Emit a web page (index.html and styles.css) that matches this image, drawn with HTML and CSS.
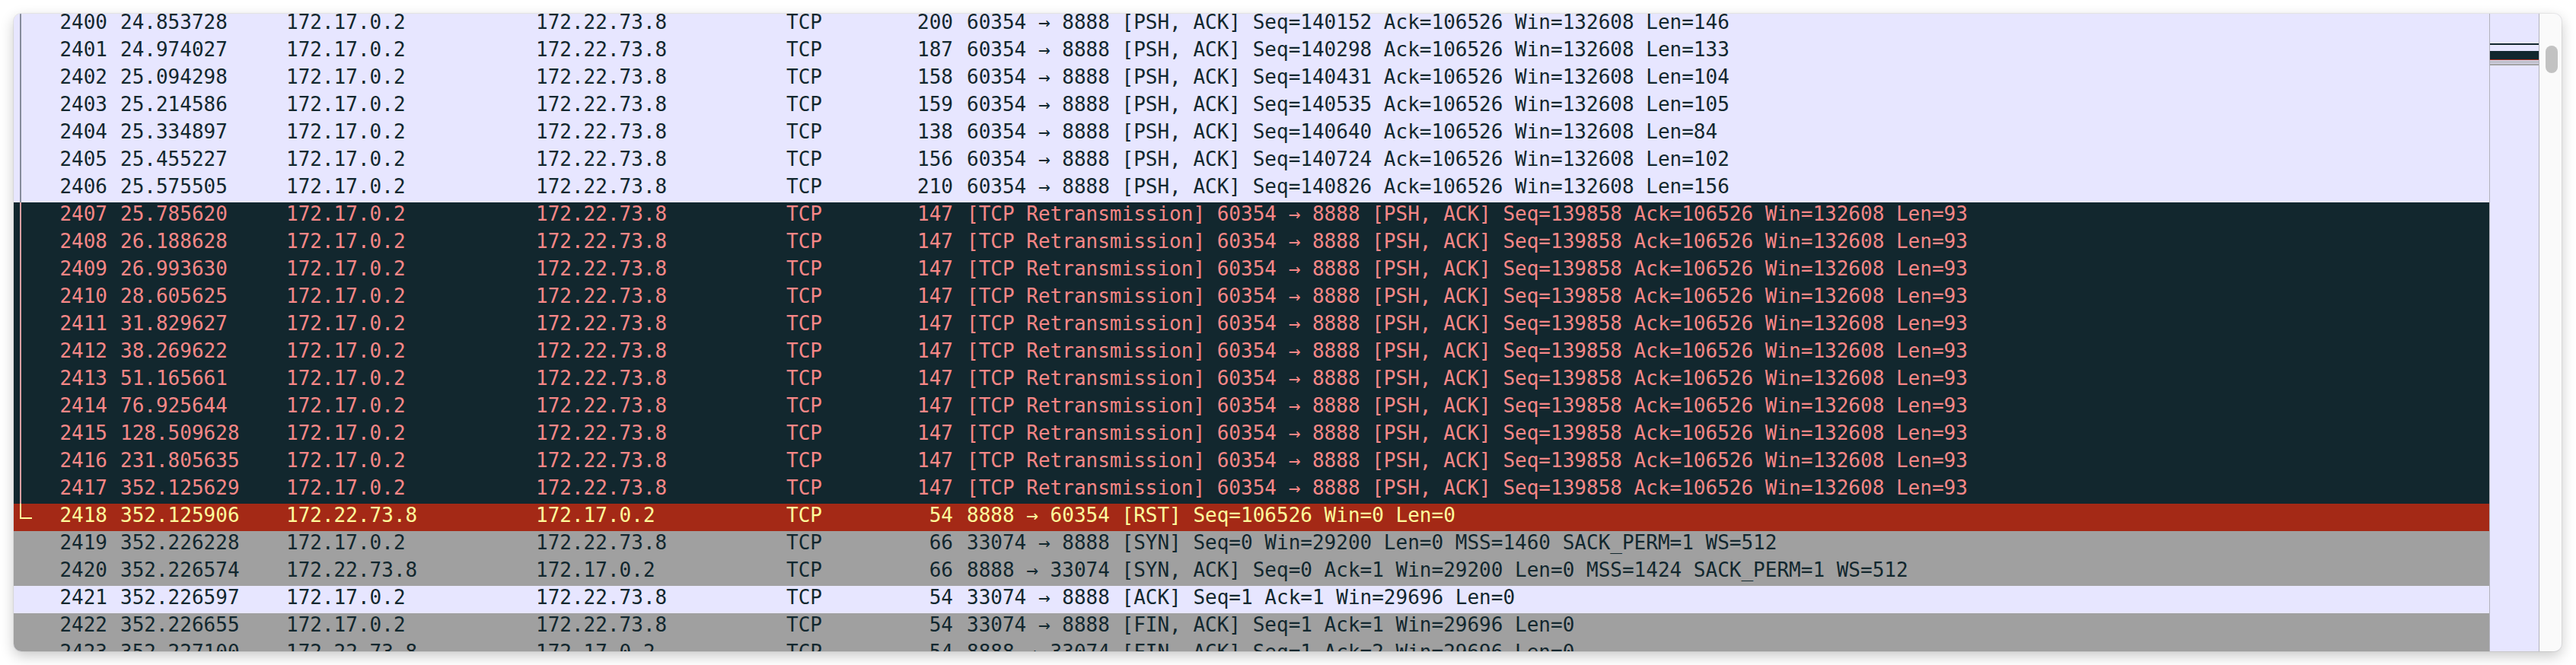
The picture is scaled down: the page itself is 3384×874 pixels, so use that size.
FILE: index.html
```html
<!DOCTYPE html>
<html lang="en">
<head>
    <meta charset="UTF-8">
    <title>Packet list</title>
    <link rel="stylesheet" href="styles.css">
</head>
<body>
    <div class="window">
        <div class="packets">
            <div class="rows">
                <div class="row tcp"><span class="no rel">2400</span><span>24.853728</span><span>172.17.0.2</span><span>172.22.73.8</span><span>TCP</span><span class="len">200</span><span class="info">60354 → 8888 [PSH, ACK] Seq=140152 Ack=106526 Win=132608 Len=146</span></div>
                <div class="row tcp"><span class="no rel">2401</span><span>24.974027</span><span>172.17.0.2</span><span>172.22.73.8</span><span>TCP</span><span class="len">187</span><span class="info">60354 → 8888 [PSH, ACK] Seq=140298 Ack=106526 Win=132608 Len=133</span></div>
                <div class="row tcp"><span class="no rel">2402</span><span>25.094298</span><span>172.17.0.2</span><span>172.22.73.8</span><span>TCP</span><span class="len">158</span><span class="info">60354 → 8888 [PSH, ACK] Seq=140431 Ack=106526 Win=132608 Len=104</span></div>
                <div class="row tcp"><span class="no rel">2403</span><span>25.214586</span><span>172.17.0.2</span><span>172.22.73.8</span><span>TCP</span><span class="len">159</span><span class="info">60354 → 8888 [PSH, ACK] Seq=140535 Ack=106526 Win=132608 Len=105</span></div>
                <div class="row tcp"><span class="no rel">2404</span><span>25.334897</span><span>172.17.0.2</span><span>172.22.73.8</span><span>TCP</span><span class="len">138</span><span class="info">60354 → 8888 [PSH, ACK] Seq=140640 Ack=106526 Win=132608 Len=84</span></div>
                <div class="row tcp"><span class="no rel">2405</span><span>25.455227</span><span>172.17.0.2</span><span>172.22.73.8</span><span>TCP</span><span class="len">156</span><span class="info">60354 → 8888 [PSH, ACK] Seq=140724 Ack=106526 Win=132608 Len=102</span></div>
                <div class="row tcp"><span class="no rel">2406</span><span>25.575505</span><span>172.17.0.2</span><span>172.22.73.8</span><span>TCP</span><span class="len">210</span><span class="info">60354 → 8888 [PSH, ACK] Seq=140826 Ack=106526 Win=132608 Len=156</span></div>
                <div class="row bad"><span class="no rel">2407</span><span>25.785620</span><span>172.17.0.2</span><span>172.22.73.8</span><span>TCP</span><span class="len">147</span><span class="info">[TCP Retransmission] 60354 → 8888 [PSH, ACK] Seq=139858 Ack=106526 Win=132608 Len=93</span></div>
                <div class="row bad"><span class="no rel">2408</span><span>26.188628</span><span>172.17.0.2</span><span>172.22.73.8</span><span>TCP</span><span class="len">147</span><span class="info">[TCP Retransmission] 60354 → 8888 [PSH, ACK] Seq=139858 Ack=106526 Win=132608 Len=93</span></div>
                <div class="row bad"><span class="no rel">2409</span><span>26.993630</span><span>172.17.0.2</span><span>172.22.73.8</span><span>TCP</span><span class="len">147</span><span class="info">[TCP Retransmission] 60354 → 8888 [PSH, ACK] Seq=139858 Ack=106526 Win=132608 Len=93</span></div>
                <div class="row bad"><span class="no rel">2410</span><span>28.605625</span><span>172.17.0.2</span><span>172.22.73.8</span><span>TCP</span><span class="len">147</span><span class="info">[TCP Retransmission] 60354 → 8888 [PSH, ACK] Seq=139858 Ack=106526 Win=132608 Len=93</span></div>
                <div class="row bad"><span class="no rel">2411</span><span>31.829627</span><span>172.17.0.2</span><span>172.22.73.8</span><span>TCP</span><span class="len">147</span><span class="info">[TCP Retransmission] 60354 → 8888 [PSH, ACK] Seq=139858 Ack=106526 Win=132608 Len=93</span></div>
                <div class="row bad"><span class="no rel">2412</span><span>38.269622</span><span>172.17.0.2</span><span>172.22.73.8</span><span>TCP</span><span class="len">147</span><span class="info">[TCP Retransmission] 60354 → 8888 [PSH, ACK] Seq=139858 Ack=106526 Win=132608 Len=93</span></div>
                <div class="row bad"><span class="no rel">2413</span><span>51.165661</span><span>172.17.0.2</span><span>172.22.73.8</span><span>TCP</span><span class="len">147</span><span class="info">[TCP Retransmission] 60354 → 8888 [PSH, ACK] Seq=139858 Ack=106526 Win=132608 Len=93</span></div>
                <div class="row bad"><span class="no rel">2414</span><span>76.925644</span><span>172.17.0.2</span><span>172.22.73.8</span><span>TCP</span><span class="len">147</span><span class="info">[TCP Retransmission] 60354 → 8888 [PSH, ACK] Seq=139858 Ack=106526 Win=132608 Len=93</span></div>
                <div class="row bad"><span class="no rel">2415</span><span>128.509628</span><span>172.17.0.2</span><span>172.22.73.8</span><span>TCP</span><span class="len">147</span><span class="info">[TCP Retransmission] 60354 → 8888 [PSH, ACK] Seq=139858 Ack=106526 Win=132608 Len=93</span></div>
                <div class="row bad"><span class="no rel">2416</span><span>231.805635</span><span>172.17.0.2</span><span>172.22.73.8</span><span>TCP</span><span class="len">147</span><span class="info">[TCP Retransmission] 60354 → 8888 [PSH, ACK] Seq=139858 Ack=106526 Win=132608 Len=93</span></div>
                <div class="row bad"><span class="no rel">2417</span><span>352.125629</span><span>172.17.0.2</span><span>172.22.73.8</span><span>TCP</span><span class="len">147</span><span class="info">[TCP Retransmission] 60354 → 8888 [PSH, ACK] Seq=139858 Ack=106526 Win=132608 Len=93</span></div>
                <div class="row rst"><span class="no rel-end">2418</span><span>352.125906</span><span>172.22.73.8</span><span>172.17.0.2</span><span>TCP</span><span class="len">54</span><span class="info">8888 → 60354 [RST] Seq=106526 Win=0 Len=0</span></div>
                <div class="row syn"><span class="no">2419</span><span>352.226228</span><span>172.17.0.2</span><span>172.22.73.8</span><span>TCP</span><span class="len">66</span><span class="info">33074 → 8888 [SYN] Seq=0 Win=29200 Len=0 MSS=1460 SACK_PERM=1 WS=512</span></div>
                <div class="row syn"><span class="no">2420</span><span>352.226574</span><span>172.22.73.8</span><span>172.17.0.2</span><span>TCP</span><span class="len">66</span><span class="info">8888 → 33074 [SYN, ACK] Seq=0 Ack=1 Win=29200 Len=0 MSS=1424 SACK_PERM=1 WS=512</span></div>
                <div class="row tcp"><span class="no">2421</span><span>352.226597</span><span>172.17.0.2</span><span>172.22.73.8</span><span>TCP</span><span class="len">54</span><span class="info">33074 → 8888 [ACK] Seq=1 Ack=1 Win=29696 Len=0</span></div>
                <div class="row syn"><span class="no">2422</span><span>352.226655</span><span>172.17.0.2</span><span>172.22.73.8</span><span>TCP</span><span class="len">54</span><span class="info">33074 → 8888 [FIN, ACK] Seq=1 Ack=1 Win=29696 Len=0</span></div>
                <div class="row syn"><span class="no">2423</span><span>352.227100</span><span>172.22.73.8</span><span>172.17.0.2</span><span>TCP</span><span class="len">54</span><span class="info">8888 → 33074 [FIN, ACK] Seq=1 Ack=2 Win=29696 Len=0</span></div>
            </div>
        </div>
        <div class="minimap"></div>
        <div class="scrollbar">
            <div class="thumb"></div>
        </div>
    </div>
</body>
</html>
```

FILE: styles.css
```css
body {
    margin: 0;
    padding: 18px 19px 18px 18px;
    background-color: #ffffff;
}

.window {
    display: flex;
    height: 838px;
    border-radius: 10px;
    overflow: hidden;
    background-color: #e7e6ff;
    box-shadow: 0 0 0 1px rgba(0, 0, 0, 0.06), 0 6px 18px rgba(0, 0, 0, 0.22);
}

.packets {
    flex: 1;
    overflow: hidden;
    border-right: 1px solid #b3b3bd;
}

.rows {
    margin-top: -4px;
}

.row {
    display: grid;
    grid-template-columns: 140px 218px 328px 329px 119px 100px 1fr;
    height: 36px;
    font-family: "DejaVu Sans Mono", monospace;
    font-size: 26px;
    line-height: 30px;
    white-space: pre;
}

.row span {
    overflow: hidden;
}

.no {
    position: relative;
    padding-right: 17px;
    text-align: right;
}

.len {
    text-align: right;
}

.info {
    padding-left: 18px;
}

/* coloring rules */
.tcp {
    background-color: #e7e6ff;
    color: #12272e;
    --line: #858b9b;
}

.bad {
    background-color: #12272e;
    color: #f78787;
    --line: #d9a0a3;
}

.rst {
    background-color: #a42916;
    color: #fffc9c;
    --line: #fffc9c;
}

.syn {
    background-color: #a0a0a0;
    color: #12272e;
    --line: #12272e;
}

/* related packet line */
.rel::before,
.rel-end::before {
    content: "";
    position: absolute;
    left: 8px;
    top: 0;
    width: 2px;
    height: 36px;
    background-color: var(--line);
}

.rel-end::before {
    height: 20px;
}

.rel-end::after {
    content: "";
    position: absolute;
    left: 8px;
    top: 18px;
    width: 16px;
    height: 2px;
    background-color: var(--line);
}

.minimap {
    width: 64px;
    border-right: 1px solid #b3b3bd;
    background: linear-gradient(to bottom,
        #e7e6ff 0 39px,
        #12272e 39px 41px,
        #e7e6ff 41px 49px,
        #12272e 49px 60px,
        #a42916 60px 61px,
        #e7e6ff 61px 62px,
        #a0a0a0 62px 63px,
        #e7e6ff 63px 64px,
        #a0a0a0 64px 65px,
        #e7e6ff 65px 66px,
        #a0a0a0 66px 68px,
        #e7e6ff 68px);
}

.scrollbar {
    width: 29px;
    background-color: #fafafa;
}

.thumb {
    width: 16px;
    height: 36px;
    margin: 42px 0 0 8px;
    border-radius: 8px;
    background-color: #c2c2c2;
}
```
